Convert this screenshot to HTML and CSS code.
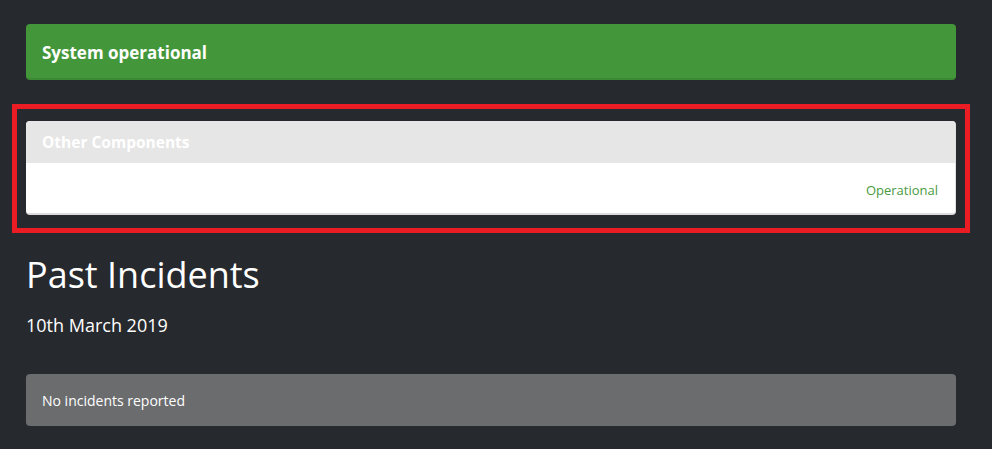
FILE: index.html
```html
<!DOCTYPE html>
<html lang="en">
<head>
<meta charset="utf-8">
<title>Status</title>
<link rel="stylesheet" href="styles.css">
</head>
<body>
<main class="page">
  <div class="status-banner">System operational</div>

  <div class="highlight">
    <section class="card">
      <div class="card-header">Other Components</div>
      <div class="card-body">
        <span class="state-ok">Operational</span>
      </div>
    </section>
  </div>

  <h1 class="section-title">Past Incidents</h1>
  <h2 class="day-title">10th March 2019</h2>
  <div class="no-incidents">No incidents reported</div>
</main>
</body>
</html>
```

FILE: styles.css
```css
html, body {
  margin: 0;
  padding: 0;
  background: #26292e;
  height: 100%;
}

body {
  font-family: "Open Sans", "DejaVu Sans", sans-serif;
  color: #ffffff;
}

.page {
  padding: 24px 36px 0 26px;
}

.status-banner {
  display: flex;
  align-items: center;
  box-sizing: border-box;
  height: 56px;
  padding: 2px 16px 0;
  background: #43973a;
  border-bottom: 2px solid #3b8933;
  border-radius: 4px;
  font-size: 17px;
  font-weight: 700;
  color: #ffffff;
}

.highlight {
  margin: 24px -14px 0;
  border: 5px solid #ec1c24;
  padding: 12px 9px 13px;
}

.card {
  background: #ffffff;
  border-radius: 4px;
  overflow: hidden;
  border-bottom: 2px solid #dcdcdd;
  border-right: 1px solid #e0e0e0;
}

.card-header {
  display: flex;
  align-items: center;
  height: 42px;
  padding: 0 16px;
  background: #e6e6e6;
  font-size: 15.5px;
  font-weight: 700;
  color: #ffffff;
}

.card-body {
  display: flex;
  align-items: center;
  justify-content: flex-end;
  box-sizing: border-box;
  height: 50px;
  padding: 3px 17px 0 16px;
}

.state-ok {
  font-size: 13px;
  color: #4a9a3f;
}

.section-title {
  margin: 17px 0 0;
  font-size: 36px;
  font-weight: 400;
  line-height: 49px;
}

.day-title {
  margin: 14px 0 0;
  font-size: 18px;
  font-weight: 400;
  line-height: 25px;
}

.no-incidents {
  display: flex;
  align-items: center;
  box-sizing: border-box;
  height: 52px;
  margin-top: 36px;
  padding: 0 16px;
  background: #6b6c6e;
  border-radius: 4px;
  font-size: 14px;
  color: #ffffff;
}
```
